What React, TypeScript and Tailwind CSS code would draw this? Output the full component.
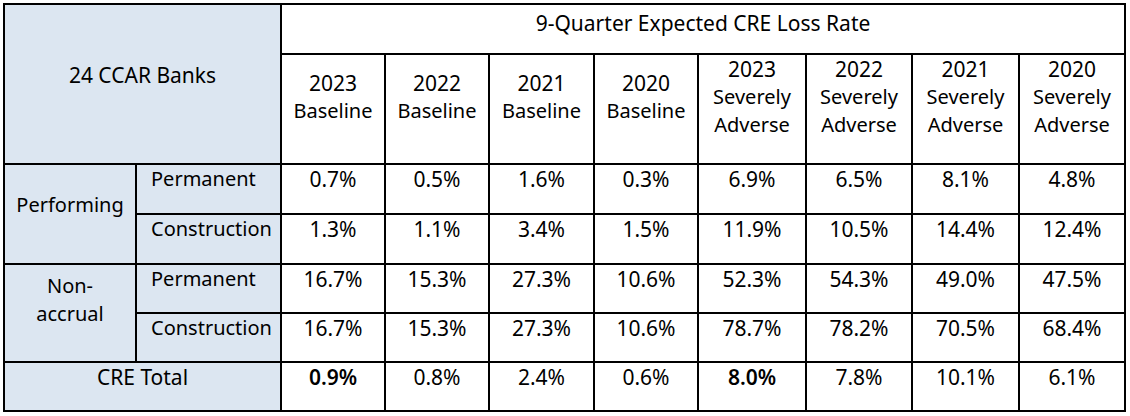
const cols = [
  { year: "2023", scen: ["Baseline"] },
  { year: "2022", scen: ["Baseline"] },
  { year: "2021", scen: ["Baseline"] },
  { year: "2020", scen: ["Baseline"] },
  { year: "2023", scen: ["Severely", "Adverse"] },
  { year: "2022", scen: ["Severely", "Adverse"] },
  { year: "2021", scen: ["Severely", "Adverse"] },
  { year: "2020", scen: ["Severely", "Adverse"] },
];

const rows = [
  ["0.7%", "0.5%", "1.6%", "0.3%", "6.9%", "6.5%", "8.1%", "4.8%"],
  ["1.3%", "1.1%", "3.4%", "1.5%", "11.9%", "10.5%", "14.4%", "12.4%"],
  ["16.7%", "15.3%", "27.3%", "10.6%", "52.3%", "54.3%", "49.0%", "47.5%"],
  ["16.7%", "15.3%", "27.3%", "10.6%", "78.7%", "78.2%", "70.5%", "68.4%"],
];

const total = ["0.9%", "0.8%", "2.4%", "0.6%", "8.0%", "7.8%", "10.1%", "6.1%"];
const bold = [0, 4];

const blue = "bg-[#dce6f1]";

function Val({ v, strong }: { v: string; strong?: boolean }) {
  return (
    <div className={`bg-white flex justify-center text-[21px] ${strong ? "font-semibold" : ""}`}>
      {v}
    </div>
  );
}

export default function App() {
  return (
    <div className="bg-white min-h-screen p-[3px]">
      <div
        className="grid w-[1123px] gap-[2px] bg-black p-[2px] text-[20px] leading-[28px] text-black"
        style={{
          fontFamily: '"Noto Sans", "Open Sans", sans-serif',
          gridTemplateColumns: "130px 143px 102px 102px 103px 102px 106px 104px 105px 104px",
          gridTemplateRows: "48px 108px 48px 48px 47px 47px 47px",
        }}
      >
        <div className={`${blue} col-span-2 row-span-2 flex items-center justify-center pb-[18px] text-[21px]`}>
          24 CCAR Banks
        </div>
        <div className="bg-white col-span-8 flex justify-center pt-[4px] text-[21px]">
          9-Quarter Expected CRE Loss Rate
        </div>
        {cols.map((c, i) => (
          <div key={i} className="bg-white flex flex-col items-center justify-center pb-[24px] text-center">
            <span className="text-[21px]">{c.year}</span>
            {c.scen.map((s) => (
              <span key={s}>{s}</span>
            ))}
          </div>
        ))}

        <div className={`${blue} row-span-2 flex items-center justify-center pb-[18px]`}>Performing</div>
        <div className={`${blue} pl-[14px]`}>Permanent</div>
        {rows[0].map((v, i) => (
          <Val key={i} v={v} />
        ))}
        <div className={`${blue} pl-[14px]`}>Construction</div>
        {rows[1].map((v, i) => (
          <Val key={i} v={v} />
        ))}

        <div className={`${blue} row-span-2 flex flex-col items-center justify-center pb-[26px]`}>
          <span>Non-</span>
          <span>accrual</span>
        </div>
        <div className={`${blue} pl-[14px]`}>Permanent</div>
        {rows[2].map((v, i) => (
          <Val key={i} v={v} />
        ))}
        <div className={`${blue} pl-[14px]`}>Construction</div>
        {rows[3].map((v, i) => (
          <Val key={i} v={v} />
        ))}

        <div className={`${blue} col-span-2 flex justify-center text-[21px]`}>CRE Total</div>
        {total.map((v, i) => (
          <Val key={i} v={v} strong={bold.includes(i)} />
        ))}
      </div>
    </div>
  );
}
